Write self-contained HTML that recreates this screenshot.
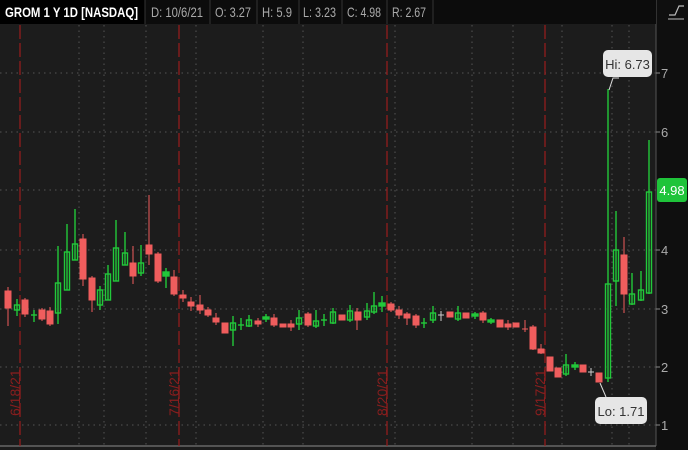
<!DOCTYPE html>
<html><head><meta charset="utf-8"><style>
body{margin:0;width:688px;height:450px;overflow:hidden;background:#1c1c1c;font-family:"Liberation Sans",sans-serif}
</style></head><body>
<svg width="688" height="450" xmlns="http://www.w3.org/2000/svg" style="position:absolute;left:0;top:0">
<rect width="688" height="450" fill="#1c1c1c"/>
<rect x="656" y="0" width="32" height="450" fill="#0f0f0f"/>
<line x1="656" y1="0" x2="656" y2="446" stroke="#555" stroke-width="1"/>
<line x1="0" y1="446" x2="656" y2="446" stroke="#666" stroke-width="1.5"/>
<g stroke="#555" stroke-width="1" stroke-dasharray="1.5,4">
<line x1="0" y1="73" x2="656" y2="73"/><line x1="0" y1="132" x2="656" y2="132"/><line x1="0" y1="190" x2="656" y2="190"/><line x1="0" y1="250" x2="656" y2="250"/><line x1="0" y1="309" x2="656" y2="309"/><line x1="0" y1="367" x2="656" y2="367"/><line x1="0" y1="425" x2="656" y2="425"/>
<line x1="79" y1="25" x2="79" y2="446"/><line x1="104" y1="25" x2="104" y2="446"/><line x1="146" y1="25" x2="146" y2="446"/><line x1="196" y1="25" x2="196" y2="446"/><line x1="263" y1="25" x2="263" y2="446"/><line x1="303" y1="25" x2="303" y2="446"/><line x1="395" y1="25" x2="395" y2="446"/><line x1="472" y1="25" x2="472" y2="446"/><line x1="513" y1="25" x2="513" y2="446"/><line x1="562" y1="25" x2="562" y2="446"/><line x1="612" y1="25" x2="612" y2="446"/><line x1="629" y1="25" x2="629" y2="446"/>
</g>
<g stroke="#9a1c1c" stroke-width="1.2" stroke-dasharray="14,4">
<line x1="20" y1="25" x2="20" y2="446"/><line x1="179" y1="25" x2="179" y2="446"/><line x1="387" y1="25" x2="387" y2="446"/><line x1="545" y1="25" x2="545" y2="446"/>
</g>
<g fill="#8a1e1e" font-size="14" font-family="Liberation Sans,sans-serif">
<text transform="translate(20,416) rotate(-90)">6/18/21</text>
<text transform="translate(179,416) rotate(-90)">7/16/21</text>
<text transform="translate(387,416) rotate(-90)">8/20/21</text>
<text transform="translate(545,416) rotate(-90)">9/17/21</text>
</g>
<g stroke="#ef5d5d" fill="#ef5d5d" stroke-width="1">
<line x1="8" y1="287" x2="8" y2="326"/><rect x="5" y="291" width="6" height="17"/>
<line x1="25" y1="298" x2="25" y2="317"/><rect x="22" y="300" width="6" height="14"/>
<line x1="42" y1="308" x2="42" y2="321"/><rect x="39" y="310" width="6" height="9"/>
<line x1="50" y1="307" x2="50" y2="326"/><rect x="47" y="311" width="6" height="13"/>
<line x1="83" y1="234" x2="83" y2="286"/><rect x="80" y="239" width="6" height="40"/>
<line x1="92" y1="276" x2="92" y2="312"/><rect x="89" y="278" width="6" height="22"/>
<line x1="133" y1="246" x2="133" y2="284"/><rect x="130" y="263" width="6" height="13"/>
<line x1="149" y1="195" x2="149" y2="265"/><rect x="146" y="245" width="6" height="9"/>
<line x1="158" y1="252" x2="158" y2="283"/><rect x="155" y="254" width="6" height="27"/>
<line x1="174" y1="270" x2="174" y2="296"/><rect x="171" y="277" width="6" height="17"/>
<line x1="183" y1="290" x2="183" y2="302"/><rect x="180" y="295" width="6" height="3"/>
<line x1="191" y1="297" x2="191" y2="311"/><rect x="188" y="302" width="6" height="4"/>
<line x1="200" y1="295" x2="200" y2="314"/><rect x="197" y="305" width="6" height="5"/>
<line x1="208" y1="307" x2="208" y2="317"/><rect x="205" y="310" width="6" height="5"/>
<line x1="216" y1="313" x2="216" y2="325"/><rect x="213" y="318" width="6" height="4"/>
<rect x="222" y="323" width="6" height="10"/>
<line x1="258" y1="318" x2="258" y2="327"/><rect x="255" y="321" width="6" height="3"/>
<line x1="274" y1="314" x2="274" y2="327"/><rect x="271" y="318" width="6" height="7"/>
<rect x="280" y="324" width="6" height="3"/>
<line x1="291" y1="320" x2="291" y2="331"/><rect x="288" y="324" width="6" height="3"/>
<line x1="308" y1="312" x2="308" y2="327"/><rect x="305" y="314" width="6" height="11"/>
<rect x="339" y="315" width="6" height="5"/>
<line x1="357" y1="308" x2="357" y2="330"/><rect x="355" y="312" width="6" height="8"/>
<line x1="391" y1="302" x2="391" y2="312"/><rect x="388" y="304" width="6" height="6"/>
<line x1="399" y1="306" x2="399" y2="319"/><rect x="396" y="310" width="6" height="5"/>
<line x1="407" y1="312" x2="407" y2="325"/><rect x="404" y="314" width="6" height="4"/>
<line x1="416" y1="314" x2="416" y2="328"/><rect x="413" y="316" width="6" height="9"/>
<rect x="447" y="312" width="6" height="5"/>
<rect x="463" y="313" width="6" height="5"/>
<line x1="483" y1="311" x2="483" y2="323"/><rect x="480" y="313" width="6" height="7"/>
<rect x="497" y="320" width="6" height="7"/>
<line x1="508" y1="320" x2="508" y2="330"/><rect x="505" y="324" width="6" height="3"/>
<rect x="513" y="323" width="6" height="4"/>
<line x1="525" y1="320" x2="525" y2="332"/><line x1="522" y1="329" x2="528" y2="329"/>
<line x1="533" y1="325" x2="533" y2="350"/><rect x="530" y="327" width="6" height="22"/>
<line x1="541" y1="344" x2="541" y2="354"/><rect x="538" y="349" width="6" height="4"/>
<rect x="547" y="357" width="6" height="14"/>
<rect x="555" y="368" width="6" height="9"/>
<rect x="580" y="365" width="6" height="7"/>
<rect x="596" y="373" width="6" height="9"/>
<line x1="624" y1="237" x2="624" y2="313"/><rect x="621" y="255" width="6" height="39"/>
</g>
<g stroke="#22c83a" fill="none" stroke-width="1.4">
<line x1="17" y1="299" x2="17" y2="316"/><rect x="14.5" y="305" width="5" height="5"/>
<line x1="34" y1="310" x2="34" y2="322"/><line x1="31" y1="315" x2="37" y2="315"/>
<line x1="58" y1="246" x2="58" y2="324"/><rect x="55.5" y="283" width="5" height="30"/>
<line x1="67" y1="224" x2="67" y2="290"/><rect x="64.5" y="252" width="5" height="38"/>
<line x1="75" y1="209" x2="75" y2="260"/><rect x="72.5" y="244" width="5" height="16"/>
<line x1="100" y1="286" x2="100" y2="310"/><rect x="97.5" y="290" width="5" height="15"/>
<line x1="108" y1="265" x2="108" y2="300"/><rect x="105.5" y="274" width="5" height="26"/>
<line x1="116" y1="220" x2="116" y2="281"/><rect x="113.5" y="248" width="5" height="33"/>
<line x1="125" y1="232" x2="125" y2="265"/><rect x="122.5" y="253" width="5" height="12"/>
<line x1="141" y1="245" x2="141" y2="276"/><rect x="138.5" y="263" width="5" height="10"/>
<line x1="166" y1="268" x2="166" y2="288"/><rect x="163" y="272" width="6" height="4" fill="#22c83a"/>
<line x1="233" y1="316" x2="233" y2="346"/><rect x="230.5" y="323" width="5" height="7"/>
<line x1="241" y1="318" x2="241" y2="330"/><line x1="238" y1="325" x2="244" y2="325"/>
<line x1="249" y1="315" x2="249" y2="327"/><rect x="246.5" y="320" width="5" height="6"/>
<line x1="266" y1="314" x2="266" y2="322"/><rect x="263" y="317" width="6" height="2" fill="#22c83a"/>
<line x1="299" y1="310" x2="299" y2="330"/><rect x="296.5" y="318" width="5" height="6"/>
<line x1="316" y1="310" x2="316" y2="328"/><rect x="313.5" y="321" width="5" height="5"/>
<line x1="324" y1="314" x2="324" y2="326"/><line x1="321" y1="320" x2="327" y2="320"/>
<line x1="333" y1="308" x2="333" y2="324"/><rect x="330.5" y="312" width="5" height="11"/>
<line x1="350" y1="305" x2="350" y2="322"/><rect x="347.5" y="311" width="5" height="9"/>
<line x1="367" y1="303" x2="367" y2="320"/><rect x="364.5" y="311" width="5" height="6"/>
<line x1="374" y1="292" x2="374" y2="314"/><rect x="371.5" y="306" width="5" height="6"/>
<line x1="382" y1="296" x2="382" y2="312"/><rect x="379" y="303" width="6" height="3" fill="#22c83a"/>
<line x1="424" y1="318" x2="424" y2="328"/><line x1="421" y1="323" x2="427" y2="323"/>
<line x1="433" y1="306" x2="433" y2="323"/><rect x="430.5" y="313" width="5" height="7"/>
<line x1="458" y1="306" x2="458" y2="321"/><rect x="455.5" y="313" width="5" height="6"/>
<line x1="475" y1="312" x2="475" y2="319"/><rect x="472" y="314" width="6" height="2" fill="#22c83a"/>
<line x1="491" y1="318" x2="491" y2="324"/><rect x="488" y="320" width="6" height="2" fill="#22c83a"/>
<line x1="566" y1="354" x2="566" y2="376"/><rect x="563.5" y="365" width="5" height="9"/>
<line x1="575" y1="362" x2="575" y2="370"/><rect x="572" y="365" width="6" height="2" fill="#22c83a"/>
<line x1="608" y1="89" x2="608" y2="382"/><rect x="605.5" y="284" width="5" height="94"/>
<line x1="616" y1="211" x2="616" y2="306"/><rect x="613.5" y="250" width="5" height="31"/>
<line x1="632" y1="273" x2="632" y2="305"/><rect x="629.5" y="294" width="5" height="10"/>
<line x1="641" y1="271" x2="641" y2="301"/><rect x="638.5" y="290" width="5" height="10"/>
<line x1="649" y1="140" x2="649" y2="294"/><rect x="646.5" y="192" width="5" height="101"/>
</g>
<g stroke="#ccc" stroke-width="1">
<line x1="441" y1="311" x2="441" y2="321"/><line x1="438" y1="315" x2="444" y2="315"/>
<line x1="591" y1="368" x2="591" y2="376"/><line x1="588" y1="372" x2="594" y2="372"/>
</g>
<path d="M609 90 L613 78 L619 78" stroke="#ddd" fill="none"/>
<rect x="603" y="50" width="49" height="27" rx="5" fill="#e6e6e6"/>
<text x="627.5" y="69" font-size="13" fill="#333" text-anchor="middle">Hi: 6.73</text>
<path d="M600 383 L606 397" stroke="#ddd" fill="none"/>
<rect x="595" y="397" width="52" height="27" rx="5" fill="#e6e6e6"/>
<text x="621" y="416" font-size="13" fill="#333" text-anchor="middle">Lo: 1.71</text>
<g stroke="#888"><line x1="656" y1="73" x2="660" y2="73"/><line x1="656" y1="132" x2="660" y2="132"/><line x1="656" y1="250" x2="660" y2="250"/><line x1="656" y1="309" x2="660" y2="309"/><line x1="656" y1="367" x2="660" y2="367"/><line x1="656" y1="425" x2="660" y2="425"/></g>
<g fill="#aaa" font-size="13">
<text x="661" y="78">7</text><text x="661" y="137">6</text><text x="661" y="255">4</text><text x="661" y="314">3</text><text x="661" y="372">2</text><text x="661" y="430">1</text>
</g>
<rect x="657" y="178" width="30" height="24" rx="3" fill="#1fc43a"/>
<text x="672" y="195" font-size="13" fill="#fff" text-anchor="middle">4.98</text>
<path d="M669 15 L675 15 L679 6 L684 6" stroke="#bbb" fill="none" stroke-width="1.2"/><line x1="668" y1="19" x2="684" y2="19" stroke="#bbb"/>
<rect x="0" y="0" width="656" height="24" fill="#0c0c0c"/>
<rect x="0" y="0" width="145" height="24" fill="#000"/>
<text x="5" y="17" font-size="14" font-weight="bold" fill="#fff" textLength="133" lengthAdjust="spacingAndGlyphs">GROM 1 Y 1D [NASDAQ]</text>
<g stroke="#333"><line x1="145" y1="0" x2="145" y2="24"/><line x1="210" y1="0" x2="210" y2="24"/><line x1="257" y1="0" x2="257" y2="24"/><line x1="299" y1="0" x2="299" y2="24"/><line x1="342" y1="0" x2="342" y2="24"/><line x1="387" y1="0" x2="387" y2="24"/><line x1="433" y1="0" x2="433" y2="24"/></g>
<g fill="#aaa" font-size="14">
<text x="151" y="17" textLength="52" lengthAdjust="spacingAndGlyphs">D: 10/6/21</text><text x="215" y="17" textLength="36" lengthAdjust="spacingAndGlyphs">O: 3.27</text><text x="262" y="17" textLength="30" lengthAdjust="spacingAndGlyphs">H: 5.9</text><text x="303" y="17" textLength="33" lengthAdjust="spacingAndGlyphs">L: 3.23</text><text x="347" y="17" textLength="34" lengthAdjust="spacingAndGlyphs">C: 4.98</text><text x="392" y="17" textLength="34" lengthAdjust="spacingAndGlyphs">R: 2.67</text>
</g>
</svg>
</body></html>
